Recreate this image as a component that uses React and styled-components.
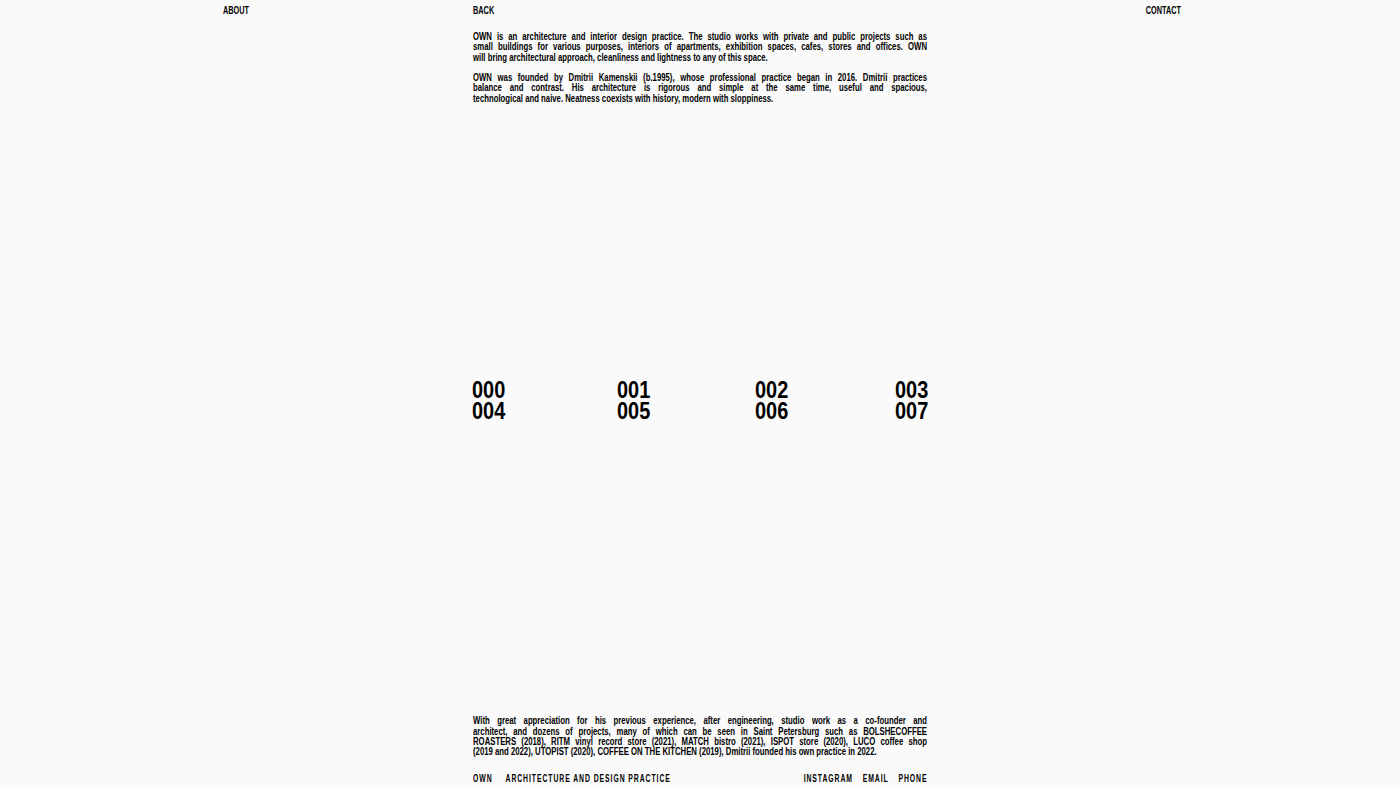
import React from "react";
import styled, { createGlobalStyle } from "styled-components";

// no condensed face is installed, so the grotesque is squeezed horizontally
const SQUEEZE = 0.705;
const COLUMN = 454;

const GlobalStyle = createGlobalStyle`
  html, body {
    margin: 0;
    padding: 0;
    background: #fafafa;
    overflow: hidden;
  }
  body {
    font-family: "Liberation Sans", Arial, sans-serif;
    font-weight: 700;
    color: #000;
  }
`;

// the column is set line by line, as in the original layout
const about = [
  [
    "OWN is an architecture and interior design practice. The studio works with private and public projects such as",
    "small buildings for various purposes, interiors of apartments, exhibition spaces, cafes, stores and offices. OWN",
    "will bring architectural approach, cleanliness and lightness to any of this space.",
  ],
  [
    "OWN was founded by Dmitrii Kamenskii (b.1995), whose professional practice began in 2016. Dmitrii practices",
    "balance and contrast. His architecture is rigorous and simple at the same time, useful and spacious,",
    "technological and naive. Neatness coexists with history, modern with sloppiness.",
  ],
];

const history = [
  "With great appreciation for his previous experience, after engineering, studio work as a co-founder and",
  "architect, and dozens of projects, many of which can be seen in Saint Petersburg such as BOLSHECOFFEE",
  "ROASTERS (2018), RITM vinyl record store (2021), MATCH bistro (2021), ISPOT store (2020), LUCO coffee shop",
  "(2019 and 2022), UTOPIST (2020), COFFEE ON THE KITCHEN (2019), Dmitrii founded his own practice in 2022.",
];

const projects = ["000", "001", "002", "003", "004", "005", "006", "007"];

function Paragraph({ lines }) {
  return (
    <Text>
      {lines.map((line, i) => (
        <Line key={i} $last={i === lines.length - 1}>
          {line}
        </Line>
      ))}
    </Text>
  );
}

export default function App() {
  return (
    <>
      <GlobalStyle />
      <Page>
        <Header>
          <NavLink>ABOUT</NavLink>
          <NavLink>BACK</NavLink>
          <NavLink $right>CONTACT</NavLink>
        </Header>

        <Column>
          {about.map((lines, i) => (
            <Paragraph key={i} lines={lines} />
          ))}
        </Column>

        <Middle>
          <Numbers>
            {projects.map((p) => (
              <Num key={p}>{p}</Num>
            ))}
          </Numbers>
        </Middle>

        <Column>
          <Paragraph lines={history} />
        </Column>

        <Footer>
          <FooterGroup>
            <FootItem>OWN</FootItem>
            <FootItem>ARCHITECTURE AND DESIGN PRACTICE</FootItem>
          </FooterGroup>
          <FooterGroup $right>
            <FootItem>INSTAGRAM</FootItem>
            <FootItem>EMAIL</FootItem>
            <FootItem>PHONE</FootItem>
          </FooterGroup>
        </Footer>
      </Page>
    </>
  );
}

const Page = styled.div`
  height: 100vh;
  display: flex;
  flex-direction: column;
  overflow: hidden;
`;

const Header = styled.header`
  box-sizing: border-box;
  height: 31px;
  padding: 5px 219px 0 223px;
  display: grid;
  grid-template-columns: 250px 1fr auto;
`;

const NavLink = styled.a`
  display: inline-block;
  justify-self: ${(p) => (p.$right ? "end" : "start")};
  font-size: 10.8px;
  line-height: 10.3px;
  transform: scaleX(0.68);
  transform-origin: ${(p) => (p.$right ? "right" : "left")} top;
  cursor: pointer;
`;

const Column = styled.section`
  width: ${COLUMN}px;
  margin: 0 auto;
`;

const Text = styled.p`
  width: ${COLUMN / SQUEEZE}px;
  margin: 0 0 10.3px;
  font-size: 11px;
  line-height: 10.3px;
  transform: scaleX(${SQUEEZE});
  transform-origin: left top;
  &:last-child {
    margin-bottom: 0;
  }
`;

const Line = styled.span`
  display: block;
  white-space: nowrap;
  text-align: justify;
  text-align-last: ${(p) => (p.$last ? "left" : "justify")};
`;

const Middle = styled.main`
  flex: 1;
  display: flex;
  align-items: center;
  justify-content: center;
  padding-bottom: 19px;
`;

const Numbers = styled.div`
  width: 455px;
  margin-left: -1px;
  display: grid;
  grid-template-columns: 33px 26px 28px 32px;
  justify-content: space-between;
  font-size: 24px;
  line-height: 21px;
`;

const Num = styled.span`
  display: block;
  white-space: nowrap;
  transform: scaleX(0.83);
  transform-origin: left top;
  cursor: pointer;
`;

const Footer = styled.footer`
  width: ${COLUMN}px;
  margin: 0 auto;
  display: grid;
  grid-template-columns: minmax(0, 1fr) auto;
  padding: 16.3px 0 5px;
`;

const FooterGroup = styled.div`
  display: flex;
  justify-self: ${(p) => (p.$right ? "end" : "start")};
  gap: ${(p) => (p.$right ? 15 : 20)}px;
  white-space: nowrap;
  transform: scaleX(0.65);
  transform-origin: ${(p) => (p.$right ? "right" : "left")} top;
`;

const FootItem = styled.span`
  font-size: 10.5px;
  line-height: 10.3px;
  letter-spacing: 1.45px;
  cursor: pointer;
`;
